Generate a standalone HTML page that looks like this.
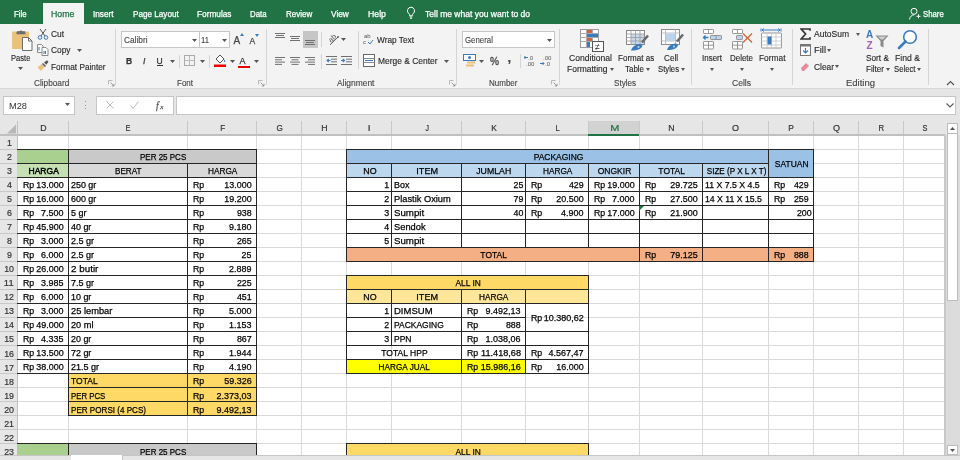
<!DOCTYPE html>
<html><head><meta charset="utf-8"><style>
html,body{margin:0;padding:0;}
body{width:960px;height:460px;overflow:hidden;position:relative;background:#fff;font-family:"Liberation Sans",sans-serif;}
div,svg,span{position:absolute;}
.t{white-space:nowrap;}
#wrap{left:0;top:0;width:960px;height:460px;overflow:hidden;will-change:transform;background:#fff;}
</style></head><body><div id="wrap">
<div style="left:0px;top:0px;width:960px;height:24px;background:#217346"></div>
<div style="left:43px;top:3px;width:41px;height:22px;background:#f3f3f3"></div>
<span class="t" style="left:14.00px;top:3.89px;font-size:8.4px;line-height:20px;color:#ffffff;transform:scaleX(0.9391);transform-origin:left center;-webkit-text-stroke:0.25px #ffffff;">File</span>
<span class="t" style="left:51.00px;top:3.89px;font-size:8.4px;line-height:20px;color:#217346;transform:scaleX(1.0478);transform-origin:left center;-webkit-text-stroke:0.25px #217346;">Home</span>
<span class="t" style="left:93.40px;top:3.89px;font-size:8.4px;line-height:20px;color:#ffffff;transform:scaleX(0.9810);transform-origin:left center;-webkit-text-stroke:0.25px #ffffff;">Insert</span>
<span class="t" style="left:132.70px;top:3.89px;font-size:8.4px;line-height:20px;color:#ffffff;transform:scaleX(0.9723);transform-origin:left center;-webkit-text-stroke:0.25px #ffffff;">Page Layout</span>
<span class="t" style="left:197.40px;top:3.89px;font-size:8.4px;line-height:20px;color:#ffffff;transform:scaleX(0.9878);transform-origin:left center;-webkit-text-stroke:0.25px #ffffff;">Formulas</span>
<span class="t" style="left:250.30px;top:3.89px;font-size:8.4px;line-height:20px;color:#ffffff;transform:scaleX(0.9378);transform-origin:left center;-webkit-text-stroke:0.25px #ffffff;">Data</span>
<span class="t" style="left:286.30px;top:3.89px;font-size:8.4px;line-height:20px;color:#ffffff;transform:scaleX(0.9553);transform-origin:left center;-webkit-text-stroke:0.25px #ffffff;">Review</span>
<span class="t" style="left:331.30px;top:3.89px;font-size:8.4px;line-height:20px;color:#ffffff;transform:scaleX(0.9921);transform-origin:left center;-webkit-text-stroke:0.25px #ffffff;">View</span>
<span class="t" style="left:367.90px;top:3.89px;font-size:8.4px;line-height:20px;color:#ffffff;transform:scaleX(1.0402);transform-origin:left center;-webkit-text-stroke:0.25px #ffffff;">Help</span>
<span class="t" style="left:424.70px;top:3.89px;font-size:8.4px;line-height:20px;color:#ffffff;transform:scaleX(1.0168);transform-origin:left center;-webkit-text-stroke:0.25px #ffffff;">Tell me what you want to do</span>
<span class="t" style="left:922.50px;top:3.89px;font-size:8.4px;line-height:20px;color:#ffffff;transform:scaleX(0.9274);transform-origin:left center;-webkit-text-stroke:0.25px #ffffff;">Share</span>
<svg style="left:405px;top:6px" width="12" height="13" viewBox="0 0 12 13"><path d="M6 1.2a3.6 3.6 0 0 0-2.1 6.5c.5.4.7.9.7 1.5v.6h2.8v-.6c0-.6.2-1.1.7-1.5A3.6 3.6 0 0 0 6 1.2z" fill="none" stroke="#fff" stroke-width="1"/><path d="M4.7 11h2.6M5.1 12.3h1.8" stroke="#fff" stroke-width="1"/></svg>
<svg style="left:908px;top:7px" width="13" height="13" viewBox="0 0 13 13"><circle cx="6" cy="4.3" r="3" fill="none" stroke="#fff" stroke-width="1"/><path d="M1.5 12.5c.6-3 2.2-4.6 4.5-4.6" fill="none" stroke="#fff" stroke-width="1"/><path d="M8.5 9.3h4M10.5 7.3v4" stroke="#fff" stroke-width="1"/></svg>
<div style="left:0px;top:24px;width:960px;height:64px;background:#f3f3f3"></div>
<div style="left:0px;top:88px;width:960px;height:1px;background:#d6d6d6"></div>
<div style="left:0px;top:89px;width:960px;height:32px;background:#e6e6e6"></div>
<div style="left:115px;top:29px;width:1px;height:56px;background:#d4d4d4"></div>
<div style="left:266px;top:29px;width:1px;height:56px;background:#d4d4d4"></div>
<div style="left:456px;top:29px;width:1px;height:56px;background:#d4d4d4"></div>
<div style="left:559px;top:29px;width:1px;height:56px;background:#d4d4d4"></div>
<div style="left:691px;top:29px;width:1px;height:56px;background:#d4d4d4"></div>
<div style="left:792px;top:29px;width:1px;height:56px;background:#d4d4d4"></div>
<div style="left:928px;top:29px;width:1px;height:56px;background:#d4d4d4"></div>
<span class="t" style="left:34.00px;top:72.72px;font-size:8.3px;line-height:20px;color:#444;transform:scaleX(0.9937);transform-origin:left center;-webkit-text-stroke:0.12px #444;">Clipboard</span>
<span class="t" style="left:177.00px;top:72.72px;font-size:8.3px;line-height:20px;color:#444;transform:scaleX(0.9639);transform-origin:left center;-webkit-text-stroke:0.12px #444;">Font</span>
<span class="t" style="left:336.50px;top:72.72px;font-size:8.3px;line-height:20px;color:#444;transform:scaleX(1.0153);transform-origin:left center;-webkit-text-stroke:0.12px #444;">Alignment</span>
<span class="t" style="left:488.50px;top:72.72px;font-size:8.3px;line-height:20px;color:#444;transform:scaleX(0.9645);transform-origin:left center;-webkit-text-stroke:0.12px #444;">Number</span>
<span class="t" style="left:614.00px;top:72.72px;font-size:8.3px;line-height:20px;color:#444;transform:scaleX(0.9745);transform-origin:left center;-webkit-text-stroke:0.12px #444;">Styles</span>
<span class="t" style="left:732.00px;top:72.72px;font-size:8.3px;line-height:20px;color:#444;transform:scaleX(1.0312);transform-origin:left center;-webkit-text-stroke:0.12px #444;">Cells</span>
<span class="t" style="left:846.00px;top:72.72px;font-size:8.3px;line-height:20px;color:#444;transform:scaleX(1.1418);transform-origin:left center;-webkit-text-stroke:0.12px #444;">Editing</span>
<svg style="left:108px;top:80px" width="7" height="7" viewBox="0 0 7 7"><path d="M0.5 0.5h4M0.5 0.5v4" stroke="#aaa" stroke-width="0.8" fill="none"/><path d="M2.5 2.5l3.5 3.5M6 3.8V6H3.8" stroke="#888" stroke-width="0.8" fill="none"/></svg>
<svg style="left:258px;top:80px" width="7" height="7" viewBox="0 0 7 7"><path d="M0.5 0.5h4M0.5 0.5v4" stroke="#aaa" stroke-width="0.8" fill="none"/><path d="M2.5 2.5l3.5 3.5M6 3.8V6H3.8" stroke="#888" stroke-width="0.8" fill="none"/></svg>
<svg style="left:449px;top:80px" width="7" height="7" viewBox="0 0 7 7"><path d="M0.5 0.5h4M0.5 0.5v4" stroke="#aaa" stroke-width="0.8" fill="none"/><path d="M2.5 2.5l3.5 3.5M6 3.8V6H3.8" stroke="#888" stroke-width="0.8" fill="none"/></svg>
<svg style="left:551px;top:80px" width="7" height="7" viewBox="0 0 7 7"><path d="M0.5 0.5h4M0.5 0.5v4" stroke="#aaa" stroke-width="0.8" fill="none"/><path d="M2.5 2.5l3.5 3.5M6 3.8V6H3.8" stroke="#888" stroke-width="0.8" fill="none"/></svg>
<svg style="left:11px;top:28px" width="22" height="24" viewBox="0 0 22 24"><rect x="1" y="3.5" width="17" height="17.5" rx="0.8" fill="#eac27c"/><path d="M5.5 6.2h9v-1.6c0-.8-.6-1.3-1.3-1.3h-1.7a1.9 1.9 0 0 0-3.2 0H6.8c-.7 0-1.3.5-1.3 1.3z" fill="#6d6d6d"/><path d="M11.5 9.5h6l3.5 3.5v9.5h-9.5z" fill="#fff" stroke="#6d6d6d" stroke-width="1"/><path d="M17.5 9.5v3.5H21" fill="none" stroke="#6d6d6d" stroke-width="1"/></svg>
<span class="t" style="left:10.60px;top:48.32px;font-size:8.3px;line-height:20px;color:#262626;transform:scaleX(0.9130);transform-origin:left center;-webkit-text-stroke:0.12px #262626;">Paste</span>
<svg style="left:18px;top:67px" width="5" height="3" viewBox="0 0 5 3"><path d="M0 0h5L2.5 3z" fill="#555"/></svg>
<svg style="left:37px;top:28px" width="12" height="12" viewBox="0 0 12 12"><path d="M3 1l5 7M9 1L4 8" stroke="#555" stroke-width="1" fill="none"/><circle cx="3" cy="9.5" r="1.8" fill="none" stroke="#3a7bbf" stroke-width="1"/><circle cx="9" cy="9.5" r="1.8" fill="none" stroke="#3a7bbf" stroke-width="1"/></svg>
<span class="t" style="left:50.50px;top:24.42px;font-size:8.3px;line-height:20px;color:#262626;transform:scaleX(1.0117);transform-origin:left center;-webkit-text-stroke:0.12px #262626;">Cut</span>
<svg style="left:37px;top:44px" width="12" height="12" viewBox="0 0 12 12"><path d="M0.5 0.5h4l1.5 1.5v6.5H0.5z" fill="#fff" stroke="#8a8a8a"/><path d="M5 3.5h4l2 2v6H5z" fill="#fff" stroke="#8a8a8a"/><path d="M2 3v3.5M7 7v3M8.5 7v3" stroke="#3a7bbf"/></svg>
<span class="t" style="left:50.50px;top:40.42px;font-size:8.3px;line-height:20px;color:#262626;transform:scaleX(1.0083);transform-origin:left center;-webkit-text-stroke:0.12px #262626;">Copy</span>
<svg style="left:77px;top:49px" width="5" height="3" viewBox="0 0 5 3"><path d="M0 0h5L2.5 3z" fill="#555"/></svg>
<svg style="left:37px;top:60px" width="12" height="12" viewBox="0 0 12 12"><path d="M0.5 7.5l4-3.5 3 3-3.5 4z" fill="#eac27c"/><path d="M5 4l1-1 3 3-1 1z" fill="#555"/><path d="M7 2.5l3-2.2 1.5 1.5-2.2 3z" fill="#555"/></svg>
<span class="t" style="left:50.50px;top:56.62px;font-size:8.3px;line-height:20px;color:#262626;transform:scaleX(0.9934);transform-origin:left center;-webkit-text-stroke:0.12px #262626;">Format Painter</span>
<div style="left:121px;top:31px;width:79px;height:17px;background:#fff;box-shadow:inset 0 0 0 1px #c6c6c6"></div>
<div style="left:199px;top:31px;width:31px;height:17px;background:#fff;box-shadow:inset 0 0 0 1px #c6c6c6"></div>
<span class="t" style="left:124.00px;top:29.92px;font-size:8.3px;line-height:20px;color:#444;transform:scaleX(1.0005);transform-origin:left center;-webkit-text-stroke:0.12px #444;">Calibri</span>
<span class="t" style="left:201.00px;top:29.92px;font-size:8.3px;line-height:20px;color:#444;transform:scaleX(0.9268);transform-origin:left center;-webkit-text-stroke:0.12px #444;">11</span>
<svg style="left:192px;top:39px" width="5" height="3" viewBox="0 0 5 3"><path d="M0 0h5L2.5 3z" fill="#555"/></svg>
<svg style="left:222px;top:39px" width="5" height="3" viewBox="0 0 5 3"><path d="M0 0h5L2.5 3z" fill="#555"/></svg>
<span class="t" style="left:233.50px;top:30.54px;font-size:10px;line-height:20px;color:#444;-webkit-text-stroke:0.25px #444;">A</span>
<span class="t" style="left:249.50px;top:31.05px;font-size:8.5px;line-height:20px;color:#444;-webkit-text-stroke:0.25px #444;">A</span>
<svg style="left:240px;top:33px" width="4" height="3" viewBox="0 0 4 3"><path d="M0 3h4L2 0z" fill="#3a7bbf"/></svg>
<svg style="left:255px;top:34px" width="4" height="3" viewBox="0 0 4 3"><path d="M0 0h4L2 3z" fill="#3a7bbf"/></svg>
<span class="t" style="left:126.00px;top:51.05px;font-size:8.5px;line-height:20px;color:#333;font-weight:bold;-webkit-text-stroke:0.25px #333;">B</span>
<span class="t" style="left:143.00px;top:51.05px;font-size:8.5px;line-height:20px;color:#333;-webkit-text-stroke:0.25px #333;font-style:italic;">I</span>
<span class="t" style="left:156.50px;top:51.05px;font-size:8.5px;line-height:20px;color:#333;-webkit-text-stroke:0.25px #333;">U</span>
<div style="left:156.5px;top:65px;width:6px;height:1px;background:#333"></div>
<svg style="left:170px;top:60px" width="5" height="3" viewBox="0 0 5 3"><path d="M0 0h5L2.5 3z" fill="#555"/></svg>
<svg style="left:200px;top:60px" width="5" height="3" viewBox="0 0 5 3"><path d="M0 0h5L2.5 3z" fill="#555"/></svg>
<svg style="left:230px;top:60px" width="5" height="3" viewBox="0 0 5 3"><path d="M0 0h5L2.5 3z" fill="#555"/></svg>
<svg style="left:254px;top:60px" width="5" height="3" viewBox="0 0 5 3"><path d="M0 0h5L2.5 3z" fill="#555"/></svg>
<div style="left:179px;top:55px;width:1px;height:13px;background:#d4d4d4"></div>
<div style="left:209px;top:55px;width:1px;height:13px;background:#d4d4d4"></div>
<svg style="left:184px;top:55px" width="11" height="11" viewBox="0 0 11 11"><rect x="0.5" y="0.5" width="10" height="10" fill="none" stroke="#aaa"/><path d="M5.5 0.5v10M0.5 5.5h10" stroke="#bbb"/></svg>
<svg style="left:214px;top:53px" width="13" height="14" viewBox="0 0 13 14"><path d="M2 6l4-4 4 4-4 4z" fill="#fff" stroke="#555"/><path d="M10.5 6.5c1 1.3 1 2.3 0 2.6c-.8-.3-.8-1.3 0-2.6z" fill="#3a7bbf"/><rect x="0" y="11.5" width="12" height="2.5" fill="#e00"/></svg>
<span class="t" style="left:239.50px;top:50.88px;font-size:9px;line-height:20px;color:#333;-webkit-text-stroke:0.25px #333;">A</span>
<div style="left:238px;top:65.5px;width:12px;height:2.5px;background:#e00"></div>
<svg style="left:275px;top:33px" width="12" height="12" viewBox="0 0 12 12"><rect x="0" y="0" width="10" height="1" fill="#707070"/><rect x="1" y="2" width="8" height="1" fill="#707070"/><rect x="0" y="4" width="10" height="1" fill="#707070"/></svg>
<svg style="left:290px;top:33px" width="12" height="12" viewBox="0 0 12 12"><rect x="0" y="3" width="10" height="1" fill="#707070"/><rect x="1" y="5" width="8" height="1" fill="#707070"/><rect x="0" y="7" width="10" height="1" fill="#707070"/></svg>
<div style="left:303px;top:31px;width:15px;height:17px;background:#c6c6c6"></div>
<svg style="left:305px;top:33px" width="12" height="12" viewBox="0 0 12 12"><rect x="0" y="7" width="10" height="1" fill="#707070"/><rect x="1" y="9" width="8" height="1" fill="#707070"/><rect x="0" y="11" width="10" height="1" fill="#707070"/></svg>
<svg style="left:275px;top:57px" width="12" height="12" viewBox="0 0 12 12"><rect x="0" y="0" width="10" height="1" fill="#707070"/><rect x="0" y="2.3" width="7" height="1" fill="#707070"/><rect x="0" y="4.6" width="10" height="1" fill="#707070"/><rect x="0" y="6.9" width="7" height="1" fill="#707070"/></svg>
<svg style="left:290px;top:57px" width="12" height="12" viewBox="0 0 12 12"><rect x="0" y="0" width="10" height="1" fill="#707070"/><rect x="1.5" y="2.3" width="7.0" height="1" fill="#707070"/><rect x="0" y="4.6" width="10" height="1" fill="#707070"/><rect x="1.5" y="6.9" width="7.0" height="1" fill="#707070"/></svg>
<svg style="left:305px;top:57px" width="12" height="12" viewBox="0 0 12 12"><rect x="0" y="0" width="10" height="1" fill="#707070"/><rect x="3" y="2.3" width="7" height="1" fill="#707070"/><rect x="0" y="4.6" width="10" height="1" fill="#707070"/><rect x="3" y="6.9" width="7" height="1" fill="#707070"/></svg>
<div style="left:321px;top:32px;width:1px;height:15px;background:#d4d4d4"></div>
<div style="left:321px;top:54px;width:1px;height:15px;background:#d4d4d4"></div>
<div style="left:358px;top:31px;width:1px;height:38px;background:#d4d4d4"></div>
<svg style="left:326px;top:32px" width="14" height="14" viewBox="0 0 14 14"><text x="1.5" y="9.5" font-size="7.5" fill="#555" font-family="Liberation Sans" transform="rotate(-45 5 6)">ab</text><path d="M4 13l8-8" stroke="#555" stroke-width="0.9"/><circle cx="12" cy="5" r="0.9" fill="#555"/></svg>
<svg style="left:341px;top:38px" width="5" height="3" viewBox="0 0 5 3"><path d="M0 0h5L2.5 3z" fill="#555"/></svg>
<svg style="left:326px;top:56px" width="12" height="11" viewBox="0 0 12 11"><rect x="0" y="0" width="11" height="1" fill="#707070"/><rect x="5" y="2.7" width="6" height="1" fill="#707070"/><rect x="5" y="5.3" width="6" height="1" fill="#707070"/><rect x="0" y="8" width="11" height="1" fill="#707070"/><path d="M1 4.5h3.5M2.8 2.8L1 4.5l1.8 1.7" stroke="#3a7bbf" stroke-width="1.1" fill="none"/></svg>
<svg style="left:341px;top:56px" width="12" height="11" viewBox="0 0 12 11"><rect x="0" y="0" width="11" height="1" fill="#707070"/><rect x="5" y="2.7" width="6" height="1" fill="#707070"/><rect x="5" y="5.3" width="6" height="1" fill="#707070"/><rect x="0" y="8" width="11" height="1" fill="#707070"/><path d="M0 4.5h3.5M1.8 2.8l1.8 1.7-1.8 1.7" stroke="#3a7bbf" stroke-width="1.1" fill="none"/></svg>
<svg style="left:363px;top:33px" width="11" height="12" viewBox="0 0 11 12"><text x="1" y="5" font-size="6" fill="#555" font-family="Liberation Sans">ab</text><text x="0" y="11" font-size="6" fill="#555" font-family="Liberation Sans">c</text><path d="M5 9l2 2 3-4" stroke="#3a7bbf" fill="none"/></svg>
<span class="t" style="left:377.00px;top:30.12px;font-size:8.3px;line-height:20px;color:#262626;transform:scaleX(0.9973);transform-origin:left center;-webkit-text-stroke:0.12px #262626;">Wrap Text</span>
<svg style="left:363px;top:54px" width="12" height="13" viewBox="0 0 12 13"><rect x="0.5" y="0.5" width="11" height="12" fill="#fff" stroke="#666"/><path d="M0.5 4.5h11M0.5 8.5h11" stroke="#888"/><path d="M2 6.5h8" stroke="#3a7bbf"/></svg>
<span class="t" style="left:377.50px;top:51.42px;font-size:8.3px;line-height:20px;color:#262626;transform:scaleX(1.0154);transform-origin:left center;-webkit-text-stroke:0.12px #262626;">Merge &amp; Center</span>
<svg style="left:444px;top:60px" width="5" height="3" viewBox="0 0 5 3"><path d="M0 0h5L2.5 3z" fill="#555"/></svg>
<div style="left:462px;top:31px;width:93px;height:17px;background:#fff;box-shadow:inset 0 0 0 1px #c6c6c6"></div>
<span class="t" style="left:465.00px;top:29.92px;font-size:8.3px;line-height:20px;color:#444;transform:scaleX(0.9476);transform-origin:left center;-webkit-text-stroke:0.12px #444;">General</span>
<svg style="left:547px;top:39px" width="5" height="3" viewBox="0 0 5 3"><path d="M0 0h5L2.5 3z" fill="#555"/></svg>
<svg style="left:463px;top:54px" width="14" height="13" viewBox="0 0 14 13"><rect x="0.5" y="0.5" width="12" height="6" fill="#fff" stroke="#3a7bbf"/><circle cx="6.5" cy="3.5" r="1.5" fill="#3a7bbf"/><rect x="4" y="7.5" width="8" height="2" fill="#e8c07a"/><rect x="3" y="10.5" width="8" height="2" fill="#e8c07a"/></svg>
<svg style="left:479px;top:60px" width="5" height="3" viewBox="0 0 5 3"><path d="M0 0h5L2.5 3z" fill="#555"/></svg>
<span class="t" style="left:490.00px;top:50.86px;font-size:10.5px;line-height:20px;color:#444;transform:scaleX(0.9631);transform-origin:left center;-webkit-text-stroke:0.3px #444;">%</span>
<span class="t" style="left:507.50px;top:47.50px;font-size:13px;line-height:20px;color:#444;font-weight:bold;-webkit-text-stroke:0.2px #444;">,</span>
<div style="left:520px;top:54px;width:1px;height:14px;background:#d4d4d4"></div>
<svg style="left:524px;top:54px" width="13" height="13" viewBox="0 0 13 13"><text x="4" y="6" font-size="6" fill="#555" font-family="Liberation Sans">.0</text><text x="2" y="12" font-size="6" fill="#555" font-family="Liberation Sans">.00</text><path d="M0 3.5h4M1.5 2l-1.5 1.5 1.5 1.5" stroke="#3a7bbf" fill="none"/></svg>
<svg style="left:540px;top:54px" width="13" height="13" viewBox="0 0 13 13"><text x="3" y="6" font-size="6" fill="#555" font-family="Liberation Sans">.00</text><text x="5" y="12" font-size="6" fill="#555" font-family="Liberation Sans">.0</text><path d="M0 9.5h4M2.5 8l1.5 1.5-1.5 1.5" stroke="#3a7bbf" fill="none"/></svg>
<svg style="left:580px;top:29px" width="24" height="23" viewBox="0 0 24 23"><g fill="#fff" stroke="#999" stroke-width="1"><rect x="0.5" y="0.5" width="18" height="18"/></g><path d="M0.5 4.5h18M0.5 8.5h18M0.5 12.5h18M6.5 0.5v18M12.5 0.5v18" stroke="#aaa"/><rect x="7" y="1" width="5" height="3" fill="#d9603b"/><rect x="7" y="5" width="11" height="3" fill="#3a7bbf"/><rect x="7" y="9" width="5" height="3" fill="#d9603b"/><rect x="7" y="13" width="3" height="5" fill="#3a7bbf"/><rect x="12.5" y="12.5" width="11" height="10" fill="#fff" stroke="#555"/><text x="15" y="21" font-size="9" fill="#333" font-family="Liberation Sans">&#8800;</text></svg>
<span class="t" style="left:569.00px;top:48.12px;font-size:8.3px;line-height:20px;color:#262626;transform:scaleX(1.0361);transform-origin:left center;-webkit-text-stroke:0.12px #262626;">Conditional</span>
<span class="t" style="left:567.00px;top:59.42px;font-size:8.3px;line-height:20px;color:#262626;transform:scaleX(1.0208);transform-origin:left center;-webkit-text-stroke:0.12px #262626;">Formatting</span>
<svg style="left:610px;top:68px" width="4" height="3" viewBox="0 0 4 3"><path d="M0 0h4L2 3z" fill="#555"/></svg>
<svg style="left:626px;top:29px" width="23" height="23" viewBox="0 0 23 23"><rect x="0.5" y="1.5" width="18" height="14" fill="#fff" stroke="#8a8a8a"/><rect x="5" y="5" width="13" height="10" fill="#c9d9ec"/><path d="M0.5 5h18M0.5 8.5h18M0.5 12h18M5 1.5v14M9.5 1.5v14M14 1.5v14" stroke="#9a9a9a" stroke-width="0.8"/><path d="M22 6.5l-6 7" stroke="#6a6a6a" stroke-width="2.6"/><path d="M5 21.5c1-3.5 4-6.5 9.5-6.5l2 1.5c-1 3.5-4 5-11.5 5z" fill="#3a7bbf"/><circle cx="12.5" cy="18" r="1" fill="#fff" opacity=".7"/></svg>
<span class="t" style="left:617.70px;top:48.12px;font-size:8.3px;line-height:20px;color:#262626;transform:scaleX(0.9719);transform-origin:left center;-webkit-text-stroke:0.12px #262626;">Format as</span>
<span class="t" style="left:625.00px;top:59.42px;font-size:8.3px;line-height:20px;color:#262626;transform:scaleX(0.9578);transform-origin:left center;-webkit-text-stroke:0.12px #262626;">Table</span>
<svg style="left:646px;top:68px" width="4" height="3" viewBox="0 0 4 3"><path d="M0 0h4L2 3z" fill="#555"/></svg>
<svg style="left:661px;top:29px" width="23" height="23" viewBox="0 0 23 23"><rect x="0.5" y="0.5" width="18" height="15" fill="#fff" stroke="#8a8a8a"/><path d="M0.5 4h18M0.5 12h18M4.5 0.5v15M14.5 0.5v15" stroke="#b0b0b0" stroke-width="0.8"/><rect x="5" y="4.5" width="9" height="7.5" fill="#bcd3ec"/><path d="M22 5.5l-6 7" stroke="#6a6a6a" stroke-width="2.6"/><path d="M6 21c1-3.5 4-6.5 9-6.5l2 1.5c-1 3.5-4 5-11 5z" fill="#3a7bbf"/><circle cx="13" cy="17.5" r="1" fill="#fff" opacity=".7"/></svg>
<span class="t" style="left:664.00px;top:48.12px;font-size:8.3px;line-height:20px;color:#262626;transform:scaleX(0.9807);transform-origin:left center;-webkit-text-stroke:0.12px #262626;">Cell</span>
<span class="t" style="left:658.00px;top:59.42px;font-size:8.3px;line-height:20px;color:#262626;transform:scaleX(0.9302);transform-origin:left center;-webkit-text-stroke:0.12px #262626;">Styles</span>
<svg style="left:681px;top:68px" width="4" height="3" viewBox="0 0 4 3"><path d="M0 0h4L2 3z" fill="#555"/></svg>
<svg style="left:700px;top:28px" width="24" height="23" viewBox="0 0 24 23"><rect x="3.5" y="1.5" width="10" height="4" rx="0.6" fill="#fff" stroke="#8c8c8c" stroke-width="0.9"/><path d="M8.5 1.5v4" stroke="#8c8c8c" stroke-width="0.9"/><rect x="10.5" y="7.5" width="11" height="4" rx="0.6" fill="#bcd3ec" stroke="#8c8c8c" stroke-width="0.9"/><path d="M16 7.5v4" stroke="#8c8c8c" stroke-width="0.9"/><path d="M3.5 9.5h5M5.5 7.5l-2 2 2 2" stroke="#3a7bbf" stroke-width="1.3" fill="none"/><rect x="3.5" y="13.5" width="10" height="7.5" rx="0.6" fill="#fff" stroke="#8c8c8c" stroke-width="0.9"/><path d="M3.5 17.2h10M8.5 13.5v7.5" stroke="#8c8c8c" stroke-width="0.9"/></svg>
<svg style="left:731px;top:28px" width="24" height="23" viewBox="0 0 24 23"><rect x="1.5" y="1.5" width="10" height="4" rx="0.6" fill="#fff" stroke="#8c8c8c" stroke-width="0.9"/><path d="M6.5 1.5v4" stroke="#8c8c8c" stroke-width="0.9"/><rect x="5.5" y="7.5" width="6" height="4" rx="0.6" fill="#bcd3ec" stroke="#8c8c8c" stroke-width="0.9"/><path d="M12 5.5l9 9M21 5.5l-9 9" stroke="#d9603b" stroke-width="1.3"/><rect x="1.5" y="13.5" width="10" height="7.5" rx="0.6" fill="#fff" stroke="#8c8c8c" stroke-width="0.9"/><path d="M1.5 17.2h10M6.5 13.5v7.5" stroke="#8c8c8c" stroke-width="0.9"/></svg>
<svg style="left:760px;top:28px" width="24" height="23" viewBox="0 0 24 23"><path d="M2 2h18M3.8 0.5L2 2l1.8 1.5M18.2 0.5L20 2l-1.8 1.5M1 0.5v3M21 0.5v3" stroke="#3a7bbf" stroke-width="1" fill="none"/><rect x="1.5" y="5" width="20" height="15" rx="0.8" fill="#fff" stroke="#8c8c8c" stroke-width="0.9"/><path d="M1.5 9h20M1.5 13h20M1.5 17h20M7 5v15M11.5 5v15M16 5v15" stroke="#c4c4c4" stroke-width="0.8"/><rect x="7.5" y="8.5" width="4" height="8" fill="#3a7bbf"/></svg>
<span class="t" style="left:702.00px;top:48.12px;font-size:8.3px;line-height:20px;color:#262626;transform:scaleX(0.9639);transform-origin:left center;-webkit-text-stroke:0.12px #262626;">Insert</span>
<span class="t" style="left:730.00px;top:48.12px;font-size:8.3px;line-height:20px;color:#262626;transform:scaleX(0.9589);transform-origin:left center;-webkit-text-stroke:0.12px #262626;">Delete</span>
<span class="t" style="left:758.50px;top:48.12px;font-size:8.3px;line-height:20px;color:#262626;transform:scaleX(1.0072);transform-origin:left center;-webkit-text-stroke:0.12px #262626;">Format</span>
<svg style="left:710px;top:68px" width="4" height="3" viewBox="0 0 4 3"><path d="M0 0h4L2 3z" fill="#555"/></svg>
<svg style="left:740px;top:68px" width="4" height="3" viewBox="0 0 4 3"><path d="M0 0h4L2 3z" fill="#555"/></svg>
<svg style="left:770px;top:68px" width="4" height="3" viewBox="0 0 4 3"><path d="M0 0h4L2 3z" fill="#555"/></svg>
<svg style="left:800px;top:28px" width="11" height="12" viewBox="0 0 11 12"><path d="M10 2.8V1H1.2l4.4 5-4.4 5H10V9.2" fill="none" stroke="#333" stroke-width="1.7"/></svg>
<span class="t" style="left:814.00px;top:24.42px;font-size:8.3px;line-height:20px;color:#262626;transform:scaleX(1.0260);transform-origin:left center;-webkit-text-stroke:0.12px #262626;">AutoSum</span>
<svg style="left:856px;top:33px" width="4" height="3" viewBox="0 0 4 3"><path d="M0 0h4L2 3z" fill="#555"/></svg>
<svg style="left:800px;top:44px" width="11" height="12" viewBox="0 0 11 12"><rect x="0.5" y="0.5" width="10" height="11" fill="#fff" stroke="#777"/><rect x="0.5" y="0.5" width="10" height="2" fill="#777"/><path d="M5.5 4v5M3 6.5l2.5 2.5 2.5-2.5" stroke="#3a7bbf" fill="none" stroke-width="1.2"/></svg>
<span class="t" style="left:814.00px;top:40.42px;font-size:8.3px;line-height:20px;color:#262626;transform:scaleX(1.1295);transform-origin:left center;-webkit-text-stroke:0.12px #262626;">Fill</span>
<svg style="left:827px;top:49px" width="4" height="3" viewBox="0 0 4 3"><path d="M0 0h4L2 3z" fill="#555"/></svg>
<svg style="left:800px;top:61px" width="11" height="10" viewBox="0 0 11 10"><path d="M1 7l5-5 3 3-5 5H2z" fill="#e88a9a"/></svg>
<span class="t" style="left:814.00px;top:56.62px;font-size:8.3px;line-height:20px;color:#262626;transform:scaleX(1.0082);transform-origin:left center;-webkit-text-stroke:0.12px #262626;">Clear</span>
<svg style="left:835px;top:65px" width="4" height="3" viewBox="0 0 4 3"><path d="M0 0h4L2 3z" fill="#555"/></svg>
<svg style="left:866px;top:29px" width="24" height="22" viewBox="0 0 24 22"><text x="0" y="9" font-size="10" font-weight="bold" fill="#3a7bbf" font-family="Liberation Sans">A</text><text x="0.5" y="20" font-size="10" font-weight="bold" fill="#a35ec2" font-family="Liberation Sans">Z</text><path d="M9.5 6.5h13l-5 5.5v6.5l-3-1.5v-5z" fill="#8a8a8a"/><path d="M12 7.5h8l-3 3h-2z" fill="#cfcfcf"/></svg>
<span class="t" style="left:866.00px;top:48.12px;font-size:8.3px;line-height:20px;color:#262626;transform:scaleX(0.9968);transform-origin:left center;-webkit-text-stroke:0.12px #262626;">Sort &amp;</span>
<span class="t" style="left:866.00px;top:59.42px;font-size:8.3px;line-height:20px;color:#262626;transform:scaleX(0.9769);transform-origin:left center;-webkit-text-stroke:0.12px #262626;">Filter</span>
<svg style="left:886px;top:68px" width="4" height="3" viewBox="0 0 4 3"><path d="M0 0h4L2 3z" fill="#555"/></svg>
<svg style="left:897px;top:29px" width="22" height="21" viewBox="0 0 22 21"><circle cx="13" cy="8" r="6.3" fill="#fff" stroke="#3a7bbf" stroke-width="1.6"/><path d="M8.5 12.5L2 19" stroke="#3a7bbf" stroke-width="2.6" stroke-linecap="round"/></svg>
<span class="t" style="left:895.00px;top:48.12px;font-size:8.3px;line-height:20px;color:#262626;transform:scaleX(1.0422);transform-origin:left center;-webkit-text-stroke:0.12px #262626;">Find &amp;</span>
<span class="t" style="left:894.00px;top:59.42px;font-size:8.3px;line-height:20px;color:#262626;transform:scaleX(0.9318);transform-origin:left center;-webkit-text-stroke:0.12px #262626;">Select</span>
<svg style="left:917px;top:68px" width="4" height="3" viewBox="0 0 4 3"><path d="M0 0h4L2 3z" fill="#555"/></svg>
<svg style="left:946px;top:80px" width="9" height="6" viewBox="0 0 9 6"><path d="M1 5l3.5-3.5L8 5" stroke="#555" fill="none" stroke-width="1.2"/></svg>
<div style="left:3px;top:96px;width:72px;height:19px;background:#fff;box-shadow:inset 0 0 0 1px #c6c6c6"></div>
<span class="t" style="left:8.50px;top:95.82px;font-size:8.6px;line-height:20px;color:#333;transform:scaleX(1.0733);transform-origin:left center;">M28</span>
<svg style="left:65px;top:103px" width="5" height="3" viewBox="0 0 5 3"><path d="M0 0h5L2.5 3z" fill="#555"/></svg>
<div style="left:85px;top:101px;width:1px;height:1.2px;background:#999"></div>
<div style="left:85px;top:104.5px;width:1px;height:1.2px;background:#999"></div>
<div style="left:85px;top:108px;width:1px;height:1.2px;background:#999"></div>
<div style="left:96px;top:96px;width:78px;height:19px;background:#fff;box-shadow:inset 0 0 0 1px #c6c6c6"></div>
<svg style="left:106px;top:101px" width="8" height="8" viewBox="0 0 8 8"><path d="M0.5 0.5l7 7M7.5 0.5l-7 7" stroke="#bbb" stroke-width="1"/></svg>
<svg style="left:130px;top:101px" width="9" height="8" viewBox="0 0 9 8"><path d="M0.5 4.5l2.5 3 5.5-7" stroke="#bbb" stroke-width="1" fill="none"/></svg>
<span class="t" style="left:156.00px;top:96.21px;font-size:9.5px;line-height:20px;color:#555;-webkit-text-stroke:0.25px #555;font-style:italic;font-family:'Liberation Serif',serif;">f</span>
<span class="t" style="left:160.30px;top:97.37px;font-size:7px;line-height:20px;color:#555;-webkit-text-stroke:0.25px #555;font-style:italic;font-family:'Liberation Serif',serif;">x</span>
<div style="left:176px;top:96px;width:780px;height:19px;background:#fff;box-shadow:inset 0 0 0 1px #c6c6c6"></div>
<svg style="left:946px;top:103px" width="8" height="5" viewBox="0 0 8 5"><path d="M0.5 0.5l3.5 3.5 3.5-3.5" stroke="#555" fill="none" stroke-width="1.1"/></svg>
<div style="left:0px;top:121px;width:946px;height:14px;background:#e6e6e6"></div>
<div style="left:0px;top:135px;width:17px;height:320px;background:#e6e6e6"></div>
<div style="left:17px;top:135px;width:928px;height:320px;background:#fff"></div>
<svg style="left:6px;top:124px" width="11" height="10" viewBox="0 0 11 10"><path d="M10 0.5V9.5H1z" fill="#b8b8b8"/></svg>
<div style="left:588px;top:121px;width:51px;height:14px;background:#d2d2d2"></div>
<div style="left:17px;top:135px;width:1px;height:320px;background:#dadada"></div>
<div style="left:17px;top:121px;width:1px;height:14px;background:#c8c8c8"></div>
<div style="left:68px;top:135px;width:1px;height:320px;background:#dadada"></div>
<div style="left:68px;top:121px;width:1px;height:14px;background:#c8c8c8"></div>
<div style="left:187px;top:135px;width:1px;height:320px;background:#dadada"></div>
<div style="left:187px;top:121px;width:1px;height:14px;background:#c8c8c8"></div>
<div style="left:256px;top:135px;width:1px;height:320px;background:#dadada"></div>
<div style="left:256px;top:121px;width:1px;height:14px;background:#c8c8c8"></div>
<div style="left:301px;top:135px;width:1px;height:320px;background:#dadada"></div>
<div style="left:301px;top:121px;width:1px;height:14px;background:#c8c8c8"></div>
<div style="left:346px;top:135px;width:1px;height:320px;background:#dadada"></div>
<div style="left:346px;top:121px;width:1px;height:14px;background:#c8c8c8"></div>
<div style="left:391px;top:135px;width:1px;height:320px;background:#dadada"></div>
<div style="left:391px;top:121px;width:1px;height:14px;background:#c8c8c8"></div>
<div style="left:461px;top:135px;width:1px;height:320px;background:#dadada"></div>
<div style="left:461px;top:121px;width:1px;height:14px;background:#c8c8c8"></div>
<div style="left:525px;top:135px;width:1px;height:320px;background:#dadada"></div>
<div style="left:525px;top:121px;width:1px;height:14px;background:#c8c8c8"></div>
<div style="left:588px;top:135px;width:1px;height:320px;background:#dadada"></div>
<div style="left:588px;top:121px;width:1px;height:14px;background:#c8c8c8"></div>
<div style="left:639px;top:135px;width:1px;height:320px;background:#dadada"></div>
<div style="left:639px;top:121px;width:1px;height:14px;background:#c8c8c8"></div>
<div style="left:702px;top:135px;width:1px;height:320px;background:#dadada"></div>
<div style="left:702px;top:121px;width:1px;height:14px;background:#c8c8c8"></div>
<div style="left:768px;top:135px;width:1px;height:320px;background:#dadada"></div>
<div style="left:768px;top:121px;width:1px;height:14px;background:#c8c8c8"></div>
<div style="left:813px;top:135px;width:1px;height:320px;background:#dadada"></div>
<div style="left:813px;top:121px;width:1px;height:14px;background:#c8c8c8"></div>
<div style="left:858px;top:135px;width:1px;height:320px;background:#dadada"></div>
<div style="left:858px;top:121px;width:1px;height:14px;background:#c8c8c8"></div>
<div style="left:903px;top:135px;width:1px;height:320px;background:#dadada"></div>
<div style="left:903px;top:121px;width:1px;height:14px;background:#c8c8c8"></div>
<div style="left:17px;top:135px;width:928px;height:1px;background:#dadada"></div>
<div style="left:0px;top:135px;width:17px;height:1px;background:#c8c8c8"></div>
<div style="left:17px;top:149px;width:928px;height:1px;background:#dadada"></div>
<div style="left:0px;top:149px;width:17px;height:1px;background:#c8c8c8"></div>
<div style="left:17px;top:163px;width:928px;height:1px;background:#dadada"></div>
<div style="left:0px;top:163px;width:17px;height:1px;background:#c8c8c8"></div>
<div style="left:17px;top:177px;width:928px;height:1px;background:#dadada"></div>
<div style="left:0px;top:177px;width:17px;height:1px;background:#c8c8c8"></div>
<div style="left:17px;top:191px;width:928px;height:1px;background:#dadada"></div>
<div style="left:0px;top:191px;width:17px;height:1px;background:#c8c8c8"></div>
<div style="left:17px;top:205px;width:928px;height:1px;background:#dadada"></div>
<div style="left:0px;top:205px;width:17px;height:1px;background:#c8c8c8"></div>
<div style="left:17px;top:219px;width:928px;height:1px;background:#dadada"></div>
<div style="left:0px;top:219px;width:17px;height:1px;background:#c8c8c8"></div>
<div style="left:17px;top:233px;width:928px;height:1px;background:#dadada"></div>
<div style="left:0px;top:233px;width:17px;height:1px;background:#c8c8c8"></div>
<div style="left:17px;top:247px;width:928px;height:1px;background:#dadada"></div>
<div style="left:0px;top:247px;width:17px;height:1px;background:#c8c8c8"></div>
<div style="left:17px;top:261px;width:928px;height:1px;background:#dadada"></div>
<div style="left:0px;top:261px;width:17px;height:1px;background:#c8c8c8"></div>
<div style="left:17px;top:275px;width:928px;height:1px;background:#dadada"></div>
<div style="left:0px;top:275px;width:17px;height:1px;background:#c8c8c8"></div>
<div style="left:17px;top:289px;width:928px;height:1px;background:#dadada"></div>
<div style="left:0px;top:289px;width:17px;height:1px;background:#c8c8c8"></div>
<div style="left:17px;top:303px;width:928px;height:1px;background:#dadada"></div>
<div style="left:0px;top:303px;width:17px;height:1px;background:#c8c8c8"></div>
<div style="left:17px;top:317px;width:928px;height:1px;background:#dadada"></div>
<div style="left:0px;top:317px;width:17px;height:1px;background:#c8c8c8"></div>
<div style="left:17px;top:331px;width:928px;height:1px;background:#dadada"></div>
<div style="left:0px;top:331px;width:17px;height:1px;background:#c8c8c8"></div>
<div style="left:17px;top:345px;width:928px;height:1px;background:#dadada"></div>
<div style="left:0px;top:345px;width:17px;height:1px;background:#c8c8c8"></div>
<div style="left:17px;top:359px;width:928px;height:1px;background:#dadada"></div>
<div style="left:0px;top:359px;width:17px;height:1px;background:#c8c8c8"></div>
<div style="left:17px;top:373px;width:928px;height:1px;background:#dadada"></div>
<div style="left:0px;top:373px;width:17px;height:1px;background:#c8c8c8"></div>
<div style="left:17px;top:387px;width:928px;height:1px;background:#dadada"></div>
<div style="left:0px;top:387px;width:17px;height:1px;background:#c8c8c8"></div>
<div style="left:17px;top:401px;width:928px;height:1px;background:#dadada"></div>
<div style="left:0px;top:401px;width:17px;height:1px;background:#c8c8c8"></div>
<div style="left:17px;top:415px;width:928px;height:1px;background:#dadada"></div>
<div style="left:0px;top:415px;width:17px;height:1px;background:#c8c8c8"></div>
<div style="left:17px;top:429px;width:928px;height:1px;background:#dadada"></div>
<div style="left:0px;top:429px;width:17px;height:1px;background:#c8c8c8"></div>
<div style="left:17px;top:443px;width:928px;height:1px;background:#dadada"></div>
<div style="left:0px;top:443px;width:17px;height:1px;background:#c8c8c8"></div>
<div style="left:0px;top:134px;width:945px;height:1.5px;background:#c0c0c0"></div>
<div style="left:17px;top:121px;width:1.2px;height:334px;background:#c0c0c0"></div>
<div style="left:588px;top:133.5px;width:51px;height:2px;background:#217346"></div>
<span class="t" style="left:40.18px;top:118.21px;font-size:9.2px;line-height:20px;color:#333;transform:scaleX(0.9520);transform-origin:center center;-webkit-text-stroke:0.2px #333;">D</span>
<span class="t" style="left:125.43px;top:118.21px;font-size:9.2px;line-height:20px;color:#333;transform:scaleX(0.8016);transform-origin:center center;-webkit-text-stroke:0.2px #333;">E</span>
<span class="t" style="left:219.69px;top:118.21px;font-size:9.2px;line-height:20px;color:#333;transform:scaleX(0.8755);transform-origin:center center;-webkit-text-stroke:0.2px #333;">F</span>
<span class="t" style="left:275.92px;top:118.21px;font-size:9.2px;line-height:20px;color:#333;transform:scaleX(0.8839);transform-origin:center center;-webkit-text-stroke:0.2px #333;">G</span>
<span class="t" style="left:321.18px;top:118.21px;font-size:9.2px;line-height:20px;color:#333;transform:scaleX(0.9520);transform-origin:center center;-webkit-text-stroke:0.2px #333;">H</span>
<span class="t" style="left:368.22px;top:118.21px;font-size:9.2px;line-height:20px;color:#333;transform:scaleX(1.0999);transform-origin:center center;-webkit-text-stroke:0.2px #333;">I</span>
<span class="t" style="left:424.70px;top:118.21px;font-size:9.2px;line-height:20px;color:#333;transform:scaleX(0.7639);transform-origin:center center;-webkit-text-stroke:0.2px #333;">J</span>
<span class="t" style="left:490.93px;top:118.21px;font-size:9.2px;line-height:20px;color:#333;transform:scaleX(0.9162);transform-origin:center center;-webkit-text-stroke:0.2px #333;">K</span>
<span class="t" style="left:554.94px;top:118.21px;font-size:9.2px;line-height:20px;color:#333;transform:scaleX(0.8242);transform-origin:center center;-webkit-text-stroke:0.2px #333;">L</span>
<span class="t" style="left:610.67px;top:118.21px;font-size:9.2px;line-height:20px;color:#217346;transform:scaleX(1.1922);transform-origin:center center;-webkit-text-stroke:0.2px #217346;">M</span>
<span class="t" style="left:668.18px;top:118.21px;font-size:9.2px;line-height:20px;color:#333;transform:scaleX(0.9520);transform-origin:center center;-webkit-text-stroke:0.2px #333;">N</span>
<span class="t" style="left:732.42px;top:118.21px;font-size:9.2px;line-height:20px;color:#333;transform:scaleX(0.9821);transform-origin:center center;-webkit-text-stroke:0.2px #333;">O</span>
<span class="t" style="left:788.43px;top:118.21px;font-size:9.2px;line-height:20px;color:#333;transform:scaleX(0.9162);transform-origin:center center;-webkit-text-stroke:0.2px #333;">P</span>
<span class="t" style="left:832.92px;top:118.21px;font-size:9.2px;line-height:20px;color:#333;transform:scaleX(0.9821);transform-origin:center center;-webkit-text-stroke:0.2px #333;">Q</span>
<span class="t" style="left:878.18px;top:118.21px;font-size:9.2px;line-height:20px;color:#333;transform:scaleX(0.8462);transform-origin:center center;-webkit-text-stroke:0.2px #333;">R</span>
<span class="t" style="left:921.93px;top:118.21px;font-size:9.2px;line-height:20px;color:#333;transform:scaleX(0.8016);transform-origin:center center;-webkit-text-stroke:0.2px #333;">S</span>
<span class="t" style="left:6.64px;top:133.21px;font-size:9.2px;line-height:20px;color:#333;transform:scaleX(0.9616);transform-origin:center center;-webkit-text-stroke:0.2px #333;">1</span>
<span class="t" style="left:6.64px;top:147.23px;font-size:9.2px;line-height:20px;color:#333;transform:scaleX(0.9616);transform-origin:center center;-webkit-text-stroke:0.2px #333;">2</span>
<span class="t" style="left:6.64px;top:161.25px;font-size:9.2px;line-height:20px;color:#333;transform:scaleX(0.9616);transform-origin:center center;-webkit-text-stroke:0.2px #333;">3</span>
<span class="t" style="left:6.64px;top:175.27px;font-size:9.2px;line-height:20px;color:#333;transform:scaleX(0.9616);transform-origin:center center;-webkit-text-stroke:0.2px #333;">4</span>
<span class="t" style="left:6.64px;top:189.29px;font-size:9.2px;line-height:20px;color:#333;transform:scaleX(0.9616);transform-origin:center center;-webkit-text-stroke:0.2px #333;">5</span>
<span class="t" style="left:6.64px;top:203.31px;font-size:9.2px;line-height:20px;color:#333;transform:scaleX(0.9616);transform-origin:center center;-webkit-text-stroke:0.2px #333;">6</span>
<span class="t" style="left:6.64px;top:217.33px;font-size:9.2px;line-height:20px;color:#333;transform:scaleX(0.9616);transform-origin:center center;-webkit-text-stroke:0.2px #333;">7</span>
<span class="t" style="left:6.64px;top:231.35px;font-size:9.2px;line-height:20px;color:#333;transform:scaleX(0.9616);transform-origin:center center;-webkit-text-stroke:0.2px #333;">8</span>
<span class="t" style="left:6.64px;top:245.37px;font-size:9.2px;line-height:20px;color:#333;transform:scaleX(0.9616);transform-origin:center center;-webkit-text-stroke:0.2px #333;">9</span>
<span class="t" style="left:4.08px;top:259.39px;font-size:9.2px;line-height:20px;color:#333;transform:scaleX(0.9616);transform-origin:center center;-webkit-text-stroke:0.2px #333;">10</span>
<span class="t" style="left:4.43px;top:273.41px;font-size:9.2px;line-height:20px;color:#333;transform:scaleX(1.0303);transform-origin:center center;-webkit-text-stroke:0.2px #333;">11</span>
<span class="t" style="left:4.08px;top:287.43px;font-size:9.2px;line-height:20px;color:#333;transform:scaleX(0.9616);transform-origin:center center;-webkit-text-stroke:0.2px #333;">12</span>
<span class="t" style="left:4.08px;top:301.45px;font-size:9.2px;line-height:20px;color:#333;transform:scaleX(0.9616);transform-origin:center center;-webkit-text-stroke:0.2px #333;">13</span>
<span class="t" style="left:4.08px;top:315.47px;font-size:9.2px;line-height:20px;color:#333;transform:scaleX(0.9616);transform-origin:center center;-webkit-text-stroke:0.2px #333;">14</span>
<span class="t" style="left:4.08px;top:329.49px;font-size:9.2px;line-height:20px;color:#333;transform:scaleX(0.9616);transform-origin:center center;-webkit-text-stroke:0.2px #333;">15</span>
<span class="t" style="left:4.08px;top:343.51px;font-size:9.2px;line-height:20px;color:#333;transform:scaleX(0.9616);transform-origin:center center;-webkit-text-stroke:0.2px #333;">16</span>
<span class="t" style="left:4.08px;top:357.53px;font-size:9.2px;line-height:20px;color:#333;transform:scaleX(0.9616);transform-origin:center center;-webkit-text-stroke:0.2px #333;">17</span>
<span class="t" style="left:4.08px;top:371.55px;font-size:9.2px;line-height:20px;color:#333;transform:scaleX(0.9616);transform-origin:center center;-webkit-text-stroke:0.2px #333;">18</span>
<span class="t" style="left:4.08px;top:385.57px;font-size:9.2px;line-height:20px;color:#333;transform:scaleX(0.9616);transform-origin:center center;-webkit-text-stroke:0.2px #333;">19</span>
<span class="t" style="left:4.08px;top:399.59px;font-size:9.2px;line-height:20px;color:#333;transform:scaleX(0.9616);transform-origin:center center;-webkit-text-stroke:0.2px #333;">20</span>
<span class="t" style="left:4.08px;top:413.61px;font-size:9.2px;line-height:20px;color:#333;transform:scaleX(0.9616);transform-origin:center center;-webkit-text-stroke:0.2px #333;">21</span>
<span class="t" style="left:4.08px;top:427.63px;font-size:9.2px;line-height:20px;color:#333;transform:scaleX(0.9616);transform-origin:center center;-webkit-text-stroke:0.2px #333;">22</span>
<span class="t" style="left:4.08px;top:441.65px;font-size:9.2px;line-height:20px;color:#333;transform:scaleX(0.9616);transform-origin:center center;-webkit-text-stroke:0.2px #333;">23</span>
<div style="left:945px;top:121px;width:15px;height:14px;background:#e6e6e6"></div>
<div style="left:945px;top:135px;width:15px;height:320px;background:#dcdcdc"></div>
<div style="left:944px;top:135px;width:2px;height:320px;background:#c8c8c8"></div>
<div style="left:947px;top:123px;width:11px;height:11px;background:#fff;box-shadow:inset 0 0 0 1px #bdbdbd"></div>
<svg style="left:950px;top:127px" width="5" height="3" viewBox="0 0 5 3"><path d="M0 3h5L2.5 0z" fill="#555"/></svg>
<div style="left:947px;top:133px;width:11px;height:168px;background:#fff;box-shadow:inset 0 0 0 1px #bdbdbd"></div>
<div style="left:947px;top:445px;width:11px;height:10px;background:#fff;box-shadow:inset 0 0 0 1px #bdbdbd"></div>
<svg style="left:950px;top:449px" width="5" height="3" viewBox="0 0 5 3"><path d="M0 0h5L2.5 3z" fill="#555"/></svg>
<div style="left:17px;top:149px;width:52px;height:15px;background:#a9d08e"></div>
<div style="left:17px;top:163px;width:52px;height:15px;background:#c6e0b4"></div>
<div style="left:68px;top:149px;width:189px;height:15px;background:#c9c9c9"></div>
<div style="left:68px;top:163px;width:120px;height:15px;background:#d9d9d9"></div>
<div style="left:187px;top:163px;width:70px;height:15px;background:#d9d9d9"></div>
<div style="left:68px;top:373px;width:189px;height:43px;background:#ffd966"></div>
<div style="left:17px;top:443px;width:52px;height:15px;background:#a9d08e"></div>
<div style="left:68px;top:443px;width:189px;height:15px;background:#c9c9c9"></div>
<div style="left:346px;top:149px;width:423px;height:15px;background:#9bc2e6"></div>
<div style="left:768px;top:149px;width:46px;height:29px;background:#9bc2e6"></div>
<div style="left:346px;top:163px;width:423px;height:15px;background:#bdd7ee"></div>
<div style="left:346px;top:247px;width:468px;height:15px;background:#f4b084"></div>
<div style="left:346px;top:275px;width:243px;height:15px;background:#ffd966"></div>
<div style="left:346px;top:289px;width:243px;height:15px;background:#ffe699"></div>
<div style="left:346px;top:359px;width:180px;height:15px;background:#ffff00"></div>
<div style="left:346px;top:443px;width:243px;height:15px;background:#ffd966"></div>
<div style="left:17px;top:149px;width:240px;height:1px;background:#262626"></div>
<div style="left:17px;top:163px;width:240px;height:1px;background:#262626"></div>
<div style="left:17px;top:177px;width:240px;height:1px;background:#262626"></div>
<div style="left:17px;top:191px;width:240px;height:1px;background:#262626"></div>
<div style="left:17px;top:205px;width:240px;height:1px;background:#262626"></div>
<div style="left:17px;top:219px;width:240px;height:1px;background:#262626"></div>
<div style="left:17px;top:233px;width:240px;height:1px;background:#262626"></div>
<div style="left:17px;top:247px;width:240px;height:1px;background:#262626"></div>
<div style="left:17px;top:261px;width:240px;height:1px;background:#262626"></div>
<div style="left:17px;top:275px;width:240px;height:1px;background:#262626"></div>
<div style="left:17px;top:289px;width:240px;height:1px;background:#262626"></div>
<div style="left:17px;top:303px;width:240px;height:1px;background:#262626"></div>
<div style="left:17px;top:317px;width:240px;height:1px;background:#262626"></div>
<div style="left:17px;top:331px;width:240px;height:1px;background:#262626"></div>
<div style="left:17px;top:345px;width:240px;height:1px;background:#262626"></div>
<div style="left:17px;top:359px;width:240px;height:1px;background:#262626"></div>
<div style="left:17px;top:373px;width:240px;height:1px;background:#262626"></div>
<div style="left:68px;top:387px;width:189px;height:1px;background:#262626"></div>
<div style="left:68px;top:401px;width:189px;height:1px;background:#262626"></div>
<div style="left:68px;top:415px;width:189px;height:1px;background:#262626"></div>
<div style="left:68px;top:149px;width:1px;height:267px;background:#262626"></div>
<div style="left:187px;top:163px;width:1px;height:253px;background:#262626"></div>
<div style="left:256px;top:149px;width:1px;height:267px;background:#262626"></div>
<div style="left:17px;top:443px;width:240px;height:1px;background:#262626"></div>
<div style="left:68px;top:443px;width:1px;height:13px;background:#262626"></div>
<div style="left:256px;top:443px;width:1px;height:13px;background:#262626"></div>
<div style="left:346px;top:149px;width:468px;height:1px;background:#262626"></div>
<div style="left:346px;top:163px;width:423px;height:1px;background:#262626"></div>
<div style="left:346px;top:177px;width:468px;height:1px;background:#262626"></div>
<div style="left:346px;top:191px;width:468px;height:1px;background:#262626"></div>
<div style="left:346px;top:205px;width:468px;height:1px;background:#262626"></div>
<div style="left:346px;top:219px;width:468px;height:1px;background:#262626"></div>
<div style="left:346px;top:233px;width:468px;height:1px;background:#262626"></div>
<div style="left:346px;top:247px;width:468px;height:1px;background:#262626"></div>
<div style="left:346px;top:261px;width:468px;height:1px;background:#262626"></div>
<div style="left:346px;top:149px;width:1px;height:113px;background:#262626"></div>
<div style="left:391px;top:163px;width:1px;height:85px;background:#262626"></div>
<div style="left:461px;top:163px;width:1px;height:85px;background:#262626"></div>
<div style="left:525px;top:163px;width:1px;height:85px;background:#262626"></div>
<div style="left:588px;top:163px;width:1px;height:85px;background:#262626"></div>
<div style="left:639px;top:163px;width:1px;height:99px;background:#262626"></div>
<div style="left:702px;top:163px;width:1px;height:99px;background:#262626"></div>
<div style="left:768px;top:149px;width:1px;height:113px;background:#262626"></div>
<div style="left:813px;top:149px;width:1px;height:113px;background:#262626"></div>
<div style="left:346px;top:275px;width:243px;height:1px;background:#262626"></div>
<div style="left:346px;top:289px;width:243px;height:1px;background:#262626"></div>
<div style="left:346px;top:303px;width:243px;height:1px;background:#262626"></div>
<div style="left:346px;top:317px;width:46px;height:1px;background:#262626"></div>
<div style="left:391px;top:317px;width:71px;height:1px;background:#262626"></div>
<div style="left:461px;top:317px;width:65px;height:1px;background:#262626"></div>
<div style="left:346px;top:331px;width:243px;height:1px;background:#262626"></div>
<div style="left:346px;top:345px;width:243px;height:1px;background:#262626"></div>
<div style="left:346px;top:359px;width:243px;height:1px;background:#262626"></div>
<div style="left:346px;top:373px;width:243px;height:1px;background:#262626"></div>
<div style="left:346px;top:275px;width:1px;height:99px;background:#262626"></div>
<div style="left:391px;top:289px;width:1px;height:57px;background:#262626"></div>
<div style="left:461px;top:289px;width:1px;height:85px;background:#262626"></div>
<div style="left:525px;top:289px;width:1px;height:85px;background:#262626"></div>
<div style="left:588px;top:275px;width:1px;height:99px;background:#262626"></div>
<div style="left:346px;top:443px;width:243px;height:1px;background:#262626"></div>
<div style="left:346px;top:443px;width:1px;height:13px;background:#262626"></div>
<div style="left:588px;top:443px;width:1px;height:13px;background:#262626"></div>
<svg style="left:639px;top:206px" width="5" height="5" viewBox="0 0 5 5"><path d="M0 0h5L0 5z" fill="#1e7a3c"/></svg>
<span class="t" style="left:136.03px;top:147.16px;font-size:9.4px;line-height:20px;color:#000;transform:scaleX(0.8537);transform-origin:center center;-webkit-text-stroke:0.25px #000;">PER 25 PCS</span>
<span class="t" style="left:26.99px;top:161.18px;font-size:9.4px;line-height:20px;color:#000;transform:scaleX(0.9095);transform-origin:center center;-webkit-text-stroke:0.5px #000;">HARGA</span>
<span class="t" style="left:113.38px;top:161.18px;font-size:9.4px;line-height:20px;color:#000;transform:scaleX(0.8715);transform-origin:center center;-webkit-text-stroke:0.25px #000;">BERAT</span>
<span class="t" style="left:205.99px;top:161.18px;font-size:9.4px;line-height:20px;color:#000;transform:scaleX(0.8830);transform-origin:center center;-webkit-text-stroke:0.25px #000;">HARGA</span>
<span class="t" style="left:23.10px;top:175.20px;font-size:9.4px;line-height:20px;color:#000;transform:scaleX(0.9358);transform-origin:left center;-webkit-text-stroke:0.25px #000;">Rp</span>
<span class="t" style="left:34.95px;top:175.20px;font-size:9.4px;line-height:20px;color:#000;transform:scaleX(0.9534);transform-origin:right center;-webkit-text-stroke:0.25px #000;">13.000</span>
<span class="t" style="left:71.20px;top:175.20px;font-size:9.4px;line-height:20px;color:#000;transform:scaleX(0.9493);transform-origin:left center;-webkit-text-stroke:0.25px #000;">250 gr</span>
<span class="t" style="left:193.10px;top:175.20px;font-size:9.4px;line-height:20px;color:#000;transform:scaleX(0.9358);transform-origin:left center;-webkit-text-stroke:0.25px #000;">Rp</span>
<span class="t" style="left:222.95px;top:175.20px;font-size:9.4px;line-height:20px;color:#000;transform:scaleX(0.9534);transform-origin:right center;-webkit-text-stroke:0.25px #000;">13.000</span>
<span class="t" style="left:23.10px;top:189.22px;font-size:9.4px;line-height:20px;color:#000;transform:scaleX(0.9358);transform-origin:left center;-webkit-text-stroke:0.25px #000;">Rp</span>
<span class="t" style="left:34.95px;top:189.22px;font-size:9.4px;line-height:20px;color:#000;transform:scaleX(0.9534);transform-origin:right center;-webkit-text-stroke:0.25px #000;">16.000</span>
<span class="t" style="left:71.20px;top:189.22px;font-size:9.4px;line-height:20px;color:#000;transform:scaleX(0.9493);transform-origin:left center;-webkit-text-stroke:0.25px #000;">600 gr</span>
<span class="t" style="left:193.10px;top:189.22px;font-size:9.4px;line-height:20px;color:#000;transform:scaleX(0.9358);transform-origin:left center;-webkit-text-stroke:0.25px #000;">Rp</span>
<span class="t" style="left:222.95px;top:189.22px;font-size:9.4px;line-height:20px;color:#000;transform:scaleX(0.9534);transform-origin:right center;-webkit-text-stroke:0.25px #000;">19.200</span>
<span class="t" style="left:23.10px;top:203.24px;font-size:9.4px;line-height:20px;color:#000;transform:scaleX(0.9358);transform-origin:left center;-webkit-text-stroke:0.25px #000;">Rp</span>
<span class="t" style="left:40.18px;top:203.24px;font-size:9.4px;line-height:20px;color:#000;transform:scaleX(0.9561);transform-origin:right center;-webkit-text-stroke:0.25px #000;">7.500</span>
<span class="t" style="left:71.20px;top:203.24px;font-size:9.4px;line-height:20px;color:#000;transform:scaleX(0.9546);transform-origin:left center;-webkit-text-stroke:0.25px #000;">5 gr</span>
<span class="t" style="left:193.10px;top:203.24px;font-size:9.4px;line-height:20px;color:#000;transform:scaleX(0.9358);transform-origin:left center;-webkit-text-stroke:0.25px #000;">Rp</span>
<span class="t" style="left:236.02px;top:203.24px;font-size:9.4px;line-height:20px;color:#000;transform:scaleX(0.9411);transform-origin:right center;-webkit-text-stroke:0.25px #000;">938</span>
<span class="t" style="left:23.10px;top:217.26px;font-size:9.4px;line-height:20px;color:#000;transform:scaleX(0.9358);transform-origin:left center;-webkit-text-stroke:0.25px #000;">Rp</span>
<span class="t" style="left:34.95px;top:217.26px;font-size:9.4px;line-height:20px;color:#000;transform:scaleX(0.9534);transform-origin:right center;-webkit-text-stroke:0.25px #000;">45.900</span>
<span class="t" style="left:71.20px;top:217.26px;font-size:9.4px;line-height:20px;color:#000;transform:scaleX(0.9513);transform-origin:left center;-webkit-text-stroke:0.25px #000;">40 gr</span>
<span class="t" style="left:193.10px;top:217.26px;font-size:9.4px;line-height:20px;color:#000;transform:scaleX(0.9358);transform-origin:left center;-webkit-text-stroke:0.25px #000;">Rp</span>
<span class="t" style="left:228.18px;top:217.26px;font-size:9.4px;line-height:20px;color:#000;transform:scaleX(0.9561);transform-origin:right center;-webkit-text-stroke:0.25px #000;">9.180</span>
<span class="t" style="left:23.10px;top:231.28px;font-size:9.4px;line-height:20px;color:#000;transform:scaleX(0.9358);transform-origin:left center;-webkit-text-stroke:0.25px #000;">Rp</span>
<span class="t" style="left:40.18px;top:231.28px;font-size:9.4px;line-height:20px;color:#000;transform:scaleX(0.9561);transform-origin:right center;-webkit-text-stroke:0.25px #000;">3.000</span>
<span class="t" style="left:71.20px;top:231.28px;font-size:9.4px;line-height:20px;color:#000;transform:scaleX(0.9649);transform-origin:left center;-webkit-text-stroke:0.25px #000;">2.5 gr</span>
<span class="t" style="left:193.10px;top:231.28px;font-size:9.4px;line-height:20px;color:#000;transform:scaleX(0.9358);transform-origin:left center;-webkit-text-stroke:0.25px #000;">Rp</span>
<span class="t" style="left:236.02px;top:231.28px;font-size:9.4px;line-height:20px;color:#000;transform:scaleX(0.9411);transform-origin:right center;-webkit-text-stroke:0.25px #000;">265</span>
<span class="t" style="left:23.10px;top:245.30px;font-size:9.4px;line-height:20px;color:#000;transform:scaleX(0.9358);transform-origin:left center;-webkit-text-stroke:0.25px #000;">Rp</span>
<span class="t" style="left:40.18px;top:245.30px;font-size:9.4px;line-height:20px;color:#000;transform:scaleX(0.9561);transform-origin:right center;-webkit-text-stroke:0.25px #000;">6.000</span>
<span class="t" style="left:71.20px;top:245.30px;font-size:9.4px;line-height:20px;color:#000;transform:scaleX(0.9649);transform-origin:left center;-webkit-text-stroke:0.25px #000;">2.5 gr</span>
<span class="t" style="left:193.10px;top:245.30px;font-size:9.4px;line-height:20px;color:#000;transform:scaleX(0.9358);transform-origin:left center;-webkit-text-stroke:0.25px #000;">Rp</span>
<span class="t" style="left:241.25px;top:245.30px;font-size:9.4px;line-height:20px;color:#000;transform:scaleX(0.9411);transform-origin:right center;-webkit-text-stroke:0.25px #000;">25</span>
<span class="t" style="left:23.10px;top:259.32px;font-size:9.4px;line-height:20px;color:#000;transform:scaleX(0.9358);transform-origin:left center;-webkit-text-stroke:0.25px #000;">Rp</span>
<span class="t" style="left:34.95px;top:259.32px;font-size:9.4px;line-height:20px;color:#000;transform:scaleX(0.9534);transform-origin:right center;-webkit-text-stroke:0.25px #000;">26.000</span>
<span class="t" style="left:71.20px;top:259.32px;font-size:9.4px;line-height:20px;color:#000;transform:scaleX(1.0492);transform-origin:left center;-webkit-text-stroke:0.25px #000;">2 butir</span>
<span class="t" style="left:193.10px;top:259.32px;font-size:9.4px;line-height:20px;color:#000;transform:scaleX(0.9358);transform-origin:left center;-webkit-text-stroke:0.25px #000;">Rp</span>
<span class="t" style="left:228.18px;top:259.32px;font-size:9.4px;line-height:20px;color:#000;transform:scaleX(0.9561);transform-origin:right center;-webkit-text-stroke:0.25px #000;">2.889</span>
<span class="t" style="left:23.10px;top:273.34px;font-size:9.4px;line-height:20px;color:#000;transform:scaleX(0.9358);transform-origin:left center;-webkit-text-stroke:0.25px #000;">Rp</span>
<span class="t" style="left:40.18px;top:273.34px;font-size:9.4px;line-height:20px;color:#000;transform:scaleX(0.9561);transform-origin:right center;-webkit-text-stroke:0.25px #000;">3.985</span>
<span class="t" style="left:71.20px;top:273.34px;font-size:9.4px;line-height:20px;color:#000;transform:scaleX(0.9649);transform-origin:left center;-webkit-text-stroke:0.25px #000;">7.5 gr</span>
<span class="t" style="left:193.10px;top:273.34px;font-size:9.4px;line-height:20px;color:#000;transform:scaleX(0.9358);transform-origin:left center;-webkit-text-stroke:0.25px #000;">Rp</span>
<span class="t" style="left:236.02px;top:273.34px;font-size:9.4px;line-height:20px;color:#000;transform:scaleX(0.9411);transform-origin:right center;-webkit-text-stroke:0.25px #000;">225</span>
<span class="t" style="left:23.10px;top:287.36px;font-size:9.4px;line-height:20px;color:#000;transform:scaleX(0.9358);transform-origin:left center;-webkit-text-stroke:0.25px #000;">Rp</span>
<span class="t" style="left:40.18px;top:287.36px;font-size:9.4px;line-height:20px;color:#000;transform:scaleX(0.9561);transform-origin:right center;-webkit-text-stroke:0.25px #000;">6.000</span>
<span class="t" style="left:71.20px;top:287.36px;font-size:9.4px;line-height:20px;color:#000;transform:scaleX(0.9513);transform-origin:left center;-webkit-text-stroke:0.25px #000;">10 gr</span>
<span class="t" style="left:193.10px;top:287.36px;font-size:9.4px;line-height:20px;color:#000;transform:scaleX(0.9358);transform-origin:left center;-webkit-text-stroke:0.25px #000;">Rp</span>
<span class="t" style="left:236.02px;top:287.36px;font-size:9.4px;line-height:20px;color:#000;transform:scaleX(0.9411);transform-origin:right center;-webkit-text-stroke:0.25px #000;">451</span>
<span class="t" style="left:23.10px;top:301.38px;font-size:9.4px;line-height:20px;color:#000;transform:scaleX(0.9358);transform-origin:left center;-webkit-text-stroke:0.25px #000;">Rp</span>
<span class="t" style="left:40.18px;top:301.38px;font-size:9.4px;line-height:20px;color:#000;transform:scaleX(0.9561);transform-origin:right center;-webkit-text-stroke:0.25px #000;">3.000</span>
<span class="t" style="left:71.20px;top:301.38px;font-size:9.4px;line-height:20px;color:#000;transform:scaleX(0.9921);transform-origin:left center;-webkit-text-stroke:0.25px #000;">25 lembar</span>
<span class="t" style="left:193.10px;top:301.38px;font-size:9.4px;line-height:20px;color:#000;transform:scaleX(0.9358);transform-origin:left center;-webkit-text-stroke:0.25px #000;">Rp</span>
<span class="t" style="left:228.18px;top:301.38px;font-size:9.4px;line-height:20px;color:#000;transform:scaleX(0.9561);transform-origin:right center;-webkit-text-stroke:0.25px #000;">5.000</span>
<span class="t" style="left:23.10px;top:315.40px;font-size:9.4px;line-height:20px;color:#000;transform:scaleX(0.9358);transform-origin:left center;-webkit-text-stroke:0.25px #000;">Rp</span>
<span class="t" style="left:34.95px;top:315.40px;font-size:9.4px;line-height:20px;color:#000;transform:scaleX(0.9534);transform-origin:right center;-webkit-text-stroke:0.25px #000;">49.000</span>
<span class="t" style="left:71.20px;top:315.40px;font-size:9.4px;line-height:20px;color:#000;transform:scaleX(0.9784);transform-origin:left center;-webkit-text-stroke:0.25px #000;">20 ml</span>
<span class="t" style="left:193.10px;top:315.40px;font-size:9.4px;line-height:20px;color:#000;transform:scaleX(0.9358);transform-origin:left center;-webkit-text-stroke:0.25px #000;">Rp</span>
<span class="t" style="left:228.18px;top:315.40px;font-size:9.4px;line-height:20px;color:#000;transform:scaleX(0.9561);transform-origin:right center;-webkit-text-stroke:0.25px #000;">1.153</span>
<span class="t" style="left:23.10px;top:329.42px;font-size:9.4px;line-height:20px;color:#000;transform:scaleX(0.9358);transform-origin:left center;-webkit-text-stroke:0.25px #000;">Rp</span>
<span class="t" style="left:40.18px;top:329.42px;font-size:9.4px;line-height:20px;color:#000;transform:scaleX(0.9561);transform-origin:right center;-webkit-text-stroke:0.25px #000;">4.335</span>
<span class="t" style="left:71.20px;top:329.42px;font-size:9.4px;line-height:20px;color:#000;transform:scaleX(0.9513);transform-origin:left center;-webkit-text-stroke:0.25px #000;">20 gr</span>
<span class="t" style="left:193.10px;top:329.42px;font-size:9.4px;line-height:20px;color:#000;transform:scaleX(0.9358);transform-origin:left center;-webkit-text-stroke:0.25px #000;">Rp</span>
<span class="t" style="left:236.02px;top:329.42px;font-size:9.4px;line-height:20px;color:#000;transform:scaleX(0.9411);transform-origin:right center;-webkit-text-stroke:0.25px #000;">867</span>
<span class="t" style="left:23.10px;top:343.44px;font-size:9.4px;line-height:20px;color:#000;transform:scaleX(0.9358);transform-origin:left center;-webkit-text-stroke:0.25px #000;">Rp</span>
<span class="t" style="left:34.95px;top:343.44px;font-size:9.4px;line-height:20px;color:#000;transform:scaleX(0.9534);transform-origin:right center;-webkit-text-stroke:0.25px #000;">13.500</span>
<span class="t" style="left:71.20px;top:343.44px;font-size:9.4px;line-height:20px;color:#000;transform:scaleX(0.9513);transform-origin:left center;-webkit-text-stroke:0.25px #000;">72 gr</span>
<span class="t" style="left:193.10px;top:343.44px;font-size:9.4px;line-height:20px;color:#000;transform:scaleX(0.9358);transform-origin:left center;-webkit-text-stroke:0.25px #000;">Rp</span>
<span class="t" style="left:228.18px;top:343.44px;font-size:9.4px;line-height:20px;color:#000;transform:scaleX(0.9561);transform-origin:right center;-webkit-text-stroke:0.25px #000;">1.944</span>
<span class="t" style="left:23.10px;top:357.46px;font-size:9.4px;line-height:20px;color:#000;transform:scaleX(0.9358);transform-origin:left center;-webkit-text-stroke:0.25px #000;">Rp</span>
<span class="t" style="left:34.95px;top:357.46px;font-size:9.4px;line-height:20px;color:#000;transform:scaleX(0.9534);transform-origin:right center;-webkit-text-stroke:0.25px #000;">38.000</span>
<span class="t" style="left:71.20px;top:357.46px;font-size:9.4px;line-height:20px;color:#000;transform:scaleX(0.9607);transform-origin:left center;-webkit-text-stroke:0.25px #000;">21.5 gr</span>
<span class="t" style="left:193.10px;top:357.46px;font-size:9.4px;line-height:20px;color:#000;transform:scaleX(0.9358);transform-origin:left center;-webkit-text-stroke:0.25px #000;">Rp</span>
<span class="t" style="left:228.18px;top:357.46px;font-size:9.4px;line-height:20px;color:#000;transform:scaleX(0.9561);transform-origin:right center;-webkit-text-stroke:0.25px #000;">4.190</span>
<span class="t" style="left:71.20px;top:371.48px;font-size:9.4px;line-height:20px;color:#000;transform:scaleX(0.9076);transform-origin:left center;-webkit-text-stroke:0.25px #000;">TOTAL</span>
<span class="t" style="left:193.10px;top:371.48px;font-size:9.4px;line-height:20px;color:#000;transform:scaleX(0.9358);transform-origin:left center;-webkit-text-stroke:0.25px #000;">Rp</span>
<span class="t" style="left:222.95px;top:371.48px;font-size:9.4px;line-height:20px;color:#000;transform:scaleX(0.9534);transform-origin:right center;-webkit-text-stroke:0.25px #000;">59.326</span>
<span class="t" style="left:71.20px;top:385.50px;font-size:9.4px;line-height:20px;color:#000;transform:scaleX(0.8344);transform-origin:left center;-webkit-text-stroke:0.25px #000;">PER PCS</span>
<span class="t" style="left:193.10px;top:385.50px;font-size:9.4px;line-height:20px;color:#000;transform:scaleX(0.9358);transform-origin:left center;-webkit-text-stroke:0.25px #000;">Rp</span>
<span class="t" style="left:215.11px;top:385.50px;font-size:9.4px;line-height:20px;color:#000;transform:scaleX(0.9604);transform-origin:right center;-webkit-text-stroke:0.25px #000;">2.373,03</span>
<span class="t" style="left:71.20px;top:399.52px;font-size:9.4px;line-height:20px;color:#000;transform:scaleX(0.8621);transform-origin:left center;-webkit-text-stroke:0.25px #000;">PER PORSI (4 PCS)</span>
<span class="t" style="left:193.10px;top:399.52px;font-size:9.4px;line-height:20px;color:#000;transform:scaleX(0.9358);transform-origin:left center;-webkit-text-stroke:0.25px #000;">Rp</span>
<span class="t" style="left:215.11px;top:399.52px;font-size:9.4px;line-height:20px;color:#000;transform:scaleX(0.9604);transform-origin:right center;-webkit-text-stroke:0.25px #000;">9.492,13</span>
<span class="t" style="left:136.03px;top:441.58px;font-size:9.4px;line-height:20px;color:#000;transform:scaleX(0.8537);transform-origin:center center;-webkit-text-stroke:0.25px #000;">PER 25 PCS</span>
<span class="t" style="left:530.60px;top:147.16px;font-size:9.4px;line-height:20px;color:#000;transform:scaleX(0.9040);transform-origin:center center;-webkit-text-stroke:0.25px #000;">PACKAGING</span>
<span class="t" style="left:772.98px;top:154.17px;font-size:9.4px;line-height:20px;color:#000;transform:scaleX(0.9012);transform-origin:center center;-webkit-text-stroke:0.25px #000;">SATUAN</span>
<span class="t" style="left:362.65px;top:161.18px;font-size:9.4px;line-height:20px;color:#000;transform:scaleX(0.9470);transform-origin:center center;-webkit-text-stroke:0.25px #000;">NO</span>
<span class="t" style="left:415.97px;top:161.18px;font-size:9.4px;line-height:20px;color:#000;transform:scaleX(0.9703);transform-origin:center center;-webkit-text-stroke:0.25px #000;">ITEM</span>
<span class="t" style="left:475.40px;top:161.18px;font-size:9.4px;line-height:20px;color:#000;transform:scaleX(0.9344);transform-origin:center center;-webkit-text-stroke:0.25px #000;">JUMLAH</span>
<span class="t" style="left:540.99px;top:161.18px;font-size:9.4px;line-height:20px;color:#000;transform:scaleX(0.8830);transform-origin:center center;-webkit-text-stroke:0.25px #000;">HARGA</span>
<span class="t" style="left:596.16px;top:161.18px;font-size:9.4px;line-height:20px;color:#000;transform:scaleX(0.9097);transform-origin:center center;-webkit-text-stroke:0.25px #000;">ONGKIR</span>
<span class="t" style="left:656.99px;top:161.18px;font-size:9.4px;line-height:20px;color:#000;transform:scaleX(0.9076);transform-origin:center center;-webkit-text-stroke:0.25px #000;">TOTAL</span>
<span class="t" style="left:701.55px;top:161.18px;font-size:9.4px;line-height:20px;color:#000;transform:scaleX(0.8620);transform-origin:center center;-webkit-text-stroke:0.25px #000;">SIZE (P X L X T)</span>
<span class="t" style="left:384.47px;top:175.20px;font-size:9.4px;line-height:20px;color:#000;transform:scaleX(0.9411);transform-origin:right center;-webkit-text-stroke:0.25px #000;">1</span>
<span class="t" style="left:394.20px;top:175.20px;font-size:9.4px;line-height:20px;color:#000;transform:scaleX(0.9545);transform-origin:left center;-webkit-text-stroke:0.25px #000;">Box</span>
<span class="t" style="left:384.47px;top:189.22px;font-size:9.4px;line-height:20px;color:#000;transform:scaleX(0.9411);transform-origin:right center;-webkit-text-stroke:0.25px #000;">2</span>
<span class="t" style="left:394.20px;top:189.22px;font-size:9.4px;line-height:20px;color:#000;transform:scaleX(0.9908);transform-origin:left center;-webkit-text-stroke:0.25px #000;">Plastik Oxium</span>
<span class="t" style="left:384.47px;top:203.24px;font-size:9.4px;line-height:20px;color:#000;transform:scaleX(0.9411);transform-origin:right center;-webkit-text-stroke:0.25px #000;">3</span>
<span class="t" style="left:394.20px;top:203.24px;font-size:9.4px;line-height:20px;color:#000;transform:scaleX(1.0330);transform-origin:left center;-webkit-text-stroke:0.25px #000;">Sumpit</span>
<span class="t" style="left:384.47px;top:217.26px;font-size:9.4px;line-height:20px;color:#000;transform:scaleX(0.9411);transform-origin:right center;-webkit-text-stroke:0.25px #000;">4</span>
<span class="t" style="left:394.20px;top:217.26px;font-size:9.4px;line-height:20px;color:#000;transform:scaleX(0.9920);transform-origin:left center;-webkit-text-stroke:0.25px #000;">Sendok</span>
<span class="t" style="left:384.47px;top:231.28px;font-size:9.4px;line-height:20px;color:#000;transform:scaleX(0.9411);transform-origin:right center;-webkit-text-stroke:0.25px #000;">5</span>
<span class="t" style="left:394.20px;top:231.28px;font-size:9.4px;line-height:20px;color:#000;transform:scaleX(1.0330);transform-origin:left center;-webkit-text-stroke:0.25px #000;">Sumpit</span>
<span class="t" style="left:513.25px;top:175.20px;font-size:9.4px;line-height:20px;color:#000;transform:scaleX(0.9411);transform-origin:right center;-webkit-text-stroke:0.25px #000;">25</span>
<span class="t" style="left:531.10px;top:175.20px;font-size:9.4px;line-height:20px;color:#000;transform:scaleX(0.9358);transform-origin:left center;-webkit-text-stroke:0.25px #000;">Rp</span>
<span class="t" style="left:568.02px;top:175.20px;font-size:9.4px;line-height:20px;color:#000;transform:scaleX(0.9411);transform-origin:right center;-webkit-text-stroke:0.25px #000;">429</span>
<span class="t" style="left:594.10px;top:175.20px;font-size:9.4px;line-height:20px;color:#000;transform:scaleX(0.9358);transform-origin:left center;-webkit-text-stroke:0.25px #000;">Rp</span>
<span class="t" style="left:605.95px;top:175.20px;font-size:9.4px;line-height:20px;color:#000;transform:scaleX(0.9534);transform-origin:right center;-webkit-text-stroke:0.25px #000;">19.000</span>
<span class="t" style="left:645.10px;top:175.20px;font-size:9.4px;line-height:20px;color:#000;transform:scaleX(0.9358);transform-origin:left center;-webkit-text-stroke:0.25px #000;">Rp</span>
<span class="t" style="left:668.95px;top:175.20px;font-size:9.4px;line-height:20px;color:#000;transform:scaleX(0.9534);transform-origin:right center;-webkit-text-stroke:0.25px #000;">29.725</span>
<span class="t" style="left:705.20px;top:175.20px;font-size:9.4px;line-height:20px;color:#000;transform:scaleX(0.9311);transform-origin:left center;-webkit-text-stroke:0.25px #000;">11 X 7.5 X 4.5</span>
<span class="t" style="left:774.10px;top:175.20px;font-size:9.4px;line-height:20px;color:#000;transform:scaleX(0.9358);transform-origin:left center;-webkit-text-stroke:0.25px #000;">Rp</span>
<span class="t" style="left:793.02px;top:175.20px;font-size:9.4px;line-height:20px;color:#000;transform:scaleX(0.9411);transform-origin:right center;-webkit-text-stroke:0.25px #000;">429</span>
<span class="t" style="left:513.25px;top:189.22px;font-size:9.4px;line-height:20px;color:#000;transform:scaleX(0.9411);transform-origin:right center;-webkit-text-stroke:0.25px #000;">79</span>
<span class="t" style="left:531.10px;top:189.22px;font-size:9.4px;line-height:20px;color:#000;transform:scaleX(0.9358);transform-origin:left center;-webkit-text-stroke:0.25px #000;">Rp</span>
<span class="t" style="left:554.95px;top:189.22px;font-size:9.4px;line-height:20px;color:#000;transform:scaleX(0.9534);transform-origin:right center;-webkit-text-stroke:0.25px #000;">20.500</span>
<span class="t" style="left:594.10px;top:189.22px;font-size:9.4px;line-height:20px;color:#000;transform:scaleX(0.9358);transform-origin:left center;-webkit-text-stroke:0.25px #000;">Rp</span>
<span class="t" style="left:611.18px;top:189.22px;font-size:9.4px;line-height:20px;color:#000;transform:scaleX(0.9561);transform-origin:right center;-webkit-text-stroke:0.25px #000;">7.000</span>
<span class="t" style="left:645.10px;top:189.22px;font-size:9.4px;line-height:20px;color:#000;transform:scaleX(0.9358);transform-origin:left center;-webkit-text-stroke:0.25px #000;">Rp</span>
<span class="t" style="left:668.95px;top:189.22px;font-size:9.4px;line-height:20px;color:#000;transform:scaleX(0.9534);transform-origin:right center;-webkit-text-stroke:0.25px #000;">27.500</span>
<span class="t" style="left:705.20px;top:189.22px;font-size:9.4px;line-height:20px;color:#000;transform:scaleX(0.9258);transform-origin:left center;-webkit-text-stroke:0.25px #000;">14 X 11 X 15.5</span>
<span class="t" style="left:774.10px;top:189.22px;font-size:9.4px;line-height:20px;color:#000;transform:scaleX(0.9358);transform-origin:left center;-webkit-text-stroke:0.25px #000;">Rp</span>
<span class="t" style="left:793.02px;top:189.22px;font-size:9.4px;line-height:20px;color:#000;transform:scaleX(0.9411);transform-origin:right center;-webkit-text-stroke:0.25px #000;">259</span>
<span class="t" style="left:513.25px;top:203.24px;font-size:9.4px;line-height:20px;color:#000;transform:scaleX(0.9411);transform-origin:right center;-webkit-text-stroke:0.25px #000;">40</span>
<span class="t" style="left:531.10px;top:203.24px;font-size:9.4px;line-height:20px;color:#000;transform:scaleX(0.9358);transform-origin:left center;-webkit-text-stroke:0.25px #000;">Rp</span>
<span class="t" style="left:560.18px;top:203.24px;font-size:9.4px;line-height:20px;color:#000;transform:scaleX(0.9561);transform-origin:right center;-webkit-text-stroke:0.25px #000;">4.900</span>
<span class="t" style="left:594.10px;top:203.24px;font-size:9.4px;line-height:20px;color:#000;transform:scaleX(0.9358);transform-origin:left center;-webkit-text-stroke:0.25px #000;">Rp</span>
<span class="t" style="left:605.95px;top:203.24px;font-size:9.4px;line-height:20px;color:#000;transform:scaleX(0.9534);transform-origin:right center;-webkit-text-stroke:0.25px #000;">17.000</span>
<span class="t" style="left:645.10px;top:203.24px;font-size:9.4px;line-height:20px;color:#000;transform:scaleX(0.9358);transform-origin:left center;-webkit-text-stroke:0.25px #000;">Rp</span>
<span class="t" style="left:668.95px;top:203.24px;font-size:9.4px;line-height:20px;color:#000;transform:scaleX(0.9534);transform-origin:right center;-webkit-text-stroke:0.25px #000;">21.900</span>
<span class="t" style="left:796.02px;top:203.24px;font-size:9.4px;line-height:20px;color:#000;transform:scaleX(0.9411);transform-origin:right center;-webkit-text-stroke:0.25px #000;">200</span>
<span class="t" style="left:478.99px;top:245.30px;font-size:9.4px;line-height:20px;color:#000;transform:scaleX(0.9076);transform-origin:center center;-webkit-text-stroke:0.25px #000;">TOTAL</span>
<span class="t" style="left:645.10px;top:245.30px;font-size:9.4px;line-height:20px;color:#000;transform:scaleX(0.9358);transform-origin:left center;-webkit-text-stroke:0.25px #000;">Rp</span>
<span class="t" style="left:668.95px;top:245.30px;font-size:9.4px;line-height:20px;color:#000;transform:scaleX(0.9534);transform-origin:right center;-webkit-text-stroke:0.25px #000;">79.125</span>
<span class="t" style="left:774.10px;top:245.30px;font-size:9.4px;line-height:20px;color:#000;transform:scaleX(0.9358);transform-origin:left center;-webkit-text-stroke:0.25px #000;">Rp</span>
<span class="t" style="left:793.02px;top:245.30px;font-size:9.4px;line-height:20px;color:#000;transform:scaleX(0.9411);transform-origin:right center;-webkit-text-stroke:0.25px #000;">888</span>
<span class="t" style="left:454.01px;top:273.34px;font-size:9.4px;line-height:20px;color:#000;transform:scaleX(0.8912);transform-origin:center center;-webkit-text-stroke:0.25px #000;">ALL IN</span>
<span class="t" style="left:362.65px;top:287.36px;font-size:9.4px;line-height:20px;color:#000;transform:scaleX(0.9470);transform-origin:center center;-webkit-text-stroke:0.25px #000;">NO</span>
<span class="t" style="left:415.97px;top:287.36px;font-size:9.4px;line-height:20px;color:#000;transform:scaleX(0.9703);transform-origin:center center;-webkit-text-stroke:0.25px #000;">ITEM</span>
<span class="t" style="left:477.49px;top:287.36px;font-size:9.4px;line-height:20px;color:#000;transform:scaleX(0.8830);transform-origin:center center;-webkit-text-stroke:0.25px #000;">HARGA</span>
<span class="t" style="left:384.47px;top:301.38px;font-size:9.4px;line-height:20px;color:#000;transform:scaleX(0.9411);transform-origin:right center;-webkit-text-stroke:0.25px #000;">1</span>
<span class="t" style="left:394.20px;top:301.38px;font-size:9.4px;line-height:20px;color:#000;transform:scaleX(1.0140);transform-origin:left center;-webkit-text-stroke:0.25px #000;">DIMSUM</span>
<span class="t" style="left:467.10px;top:301.38px;font-size:9.4px;line-height:20px;color:#000;transform:scaleX(0.9358);transform-origin:left center;-webkit-text-stroke:0.25px #000;">Rp</span>
<span class="t" style="left:484.11px;top:301.38px;font-size:9.4px;line-height:20px;color:#000;transform:scaleX(0.9604);transform-origin:right center;-webkit-text-stroke:0.25px #000;">9.492,13</span>
<span class="t" style="left:384.47px;top:315.40px;font-size:9.4px;line-height:20px;color:#000;transform:scaleX(0.9411);transform-origin:right center;-webkit-text-stroke:0.25px #000;">2</span>
<span class="t" style="left:394.20px;top:315.40px;font-size:9.4px;line-height:20px;color:#000;transform:scaleX(0.9040);transform-origin:left center;-webkit-text-stroke:0.25px #000;">PACKAGING</span>
<span class="t" style="left:467.10px;top:315.40px;font-size:9.4px;line-height:20px;color:#000;transform:scaleX(0.9358);transform-origin:left center;-webkit-text-stroke:0.25px #000;">Rp</span>
<span class="t" style="left:505.02px;top:315.40px;font-size:9.4px;line-height:20px;color:#000;transform:scaleX(0.9411);transform-origin:right center;-webkit-text-stroke:0.25px #000;">888</span>
<span class="t" style="left:384.47px;top:329.42px;font-size:9.4px;line-height:20px;color:#000;transform:scaleX(0.9411);transform-origin:right center;-webkit-text-stroke:0.25px #000;">3</span>
<span class="t" style="left:394.20px;top:329.42px;font-size:9.4px;line-height:20px;color:#000;transform:scaleX(0.9090);transform-origin:left center;-webkit-text-stroke:0.25px #000;">PPN</span>
<span class="t" style="left:467.10px;top:329.42px;font-size:9.4px;line-height:20px;color:#000;transform:scaleX(0.9358);transform-origin:left center;-webkit-text-stroke:0.25px #000;">Rp</span>
<span class="t" style="left:484.11px;top:329.42px;font-size:9.4px;line-height:20px;color:#000;transform:scaleX(0.9604);transform-origin:right center;-webkit-text-stroke:0.25px #000;">1.038,06</span>
<span class="t" style="left:531.10px;top:308.39px;font-size:9.4px;line-height:20px;color:#000;transform:scaleX(0.9358);transform-origin:left center;-webkit-text-stroke:0.25px #000;">Rp</span>
<span class="t" style="left:541.89px;top:308.39px;font-size:9.4px;line-height:20px;color:#000;transform:scaleX(0.9580);transform-origin:right center;-webkit-text-stroke:0.25px #000;">10.380,62</span>
<span class="t" style="left:379.19px;top:343.44px;font-size:9.4px;line-height:20px;color:#000;transform:scaleX(0.9092);transform-origin:center center;-webkit-text-stroke:0.25px #000;">TOTAL HPP</span>
<span class="t" style="left:467.10px;top:343.44px;font-size:9.4px;line-height:20px;color:#000;transform:scaleX(0.9358);transform-origin:left center;-webkit-text-stroke:0.25px #000;">Rp</span>
<span class="t" style="left:479.58px;top:343.44px;font-size:9.4px;line-height:20px;color:#000;transform:scaleX(0.9743);transform-origin:right center;-webkit-text-stroke:0.25px #000;">11.418,68</span>
<span class="t" style="left:531.10px;top:343.44px;font-size:9.4px;line-height:20px;color:#000;transform:scaleX(0.9358);transform-origin:left center;-webkit-text-stroke:0.25px #000;">Rp</span>
<span class="t" style="left:547.11px;top:343.44px;font-size:9.4px;line-height:20px;color:#000;transform:scaleX(0.9604);transform-origin:right center;-webkit-text-stroke:0.25px #000;">4.567,47</span>
<span class="t" style="left:375.45px;top:357.46px;font-size:9.4px;line-height:20px;color:#000;transform:scaleX(0.8769);transform-origin:center center;-webkit-text-stroke:0.25px #000;">HARGA JUAL</span>
<span class="t" style="left:467.10px;top:357.46px;font-size:9.4px;line-height:20px;color:#000;transform:scaleX(0.9358);transform-origin:left center;-webkit-text-stroke:0.25px #000;">Rp</span>
<span class="t" style="left:478.89px;top:357.46px;font-size:9.4px;line-height:20px;color:#000;transform:scaleX(0.9580);transform-origin:right center;-webkit-text-stroke:0.25px #000;">15.986,16</span>
<span class="t" style="left:531.10px;top:357.46px;font-size:9.4px;line-height:20px;color:#000;transform:scaleX(0.9358);transform-origin:left center;-webkit-text-stroke:0.25px #000;">Rp</span>
<span class="t" style="left:554.95px;top:357.46px;font-size:9.4px;line-height:20px;color:#000;transform:scaleX(0.9534);transform-origin:right center;-webkit-text-stroke:0.25px #000;">16.000</span>
<span class="t" style="left:454.01px;top:441.58px;font-size:9.4px;line-height:20px;color:#000;transform:scaleX(0.8912);transform-origin:center center;-webkit-text-stroke:0.25px #000;">ALL IN</span>
<div style="left:0px;top:455px;width:960px;height:5px;background:#e6e6e6"></div>
<div style="left:0px;top:455px;width:960px;height:1px;background:#c6c6c6"></div>
<div style="left:71px;top:455px;width:51px;height:5px;background:#fff"></div>
<div style="left:122px;top:455px;width:1px;height:5px;background:#c6c6c6"></div>
</div></body></html>
